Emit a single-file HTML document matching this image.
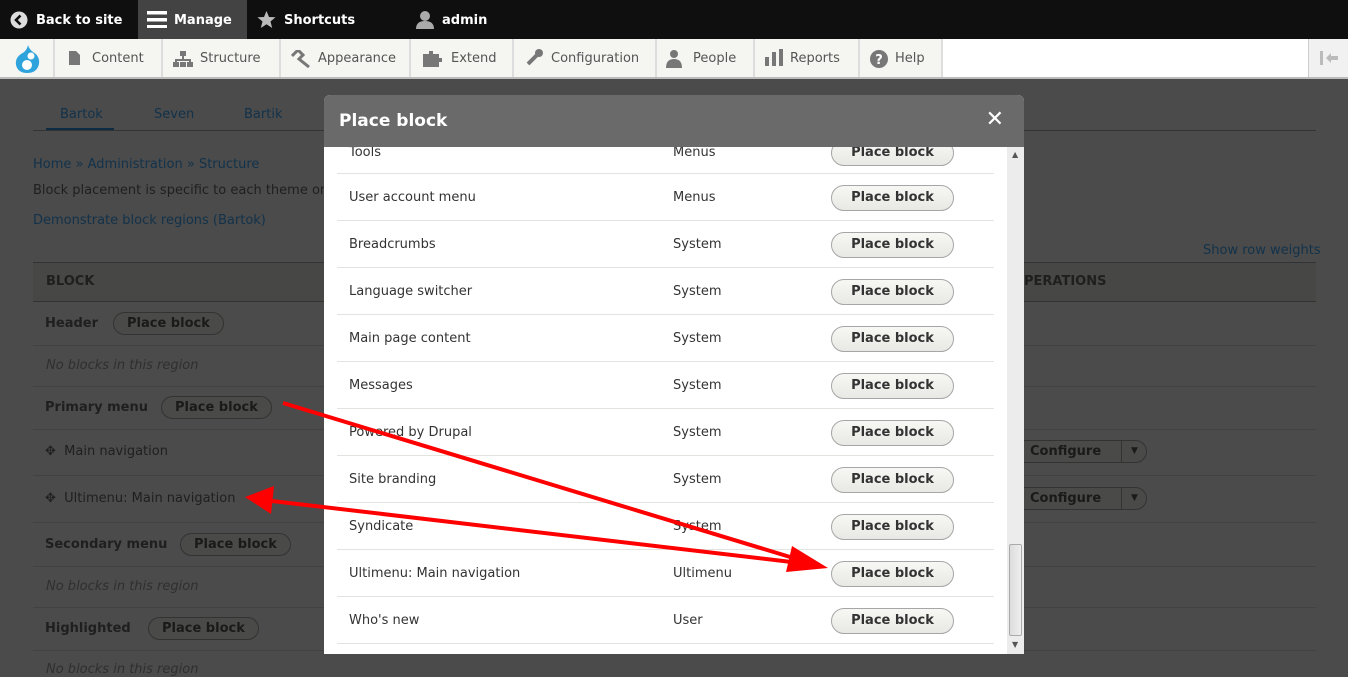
<!DOCTYPE html>
<html style="background:#4b4b4b"><head><style>
*{box-sizing:border-box;margin:0;padding:0}
body{width:1348px;height:669px;overflow:hidden;background:#4b4b4b;font-family:"DejaVu Sans","Liberation Sans",sans-serif;font-size:13px;position:relative}
.abs{position:absolute}
.top{left:0;top:0;width:1348px;height:39px;background:#0f0f0f;color:#fff;font-weight:bold;font-size:13px}
.top span{position:absolute;top:13px}
.bar{left:0;top:39px;width:1348px;height:40px;background:#fff;border-bottom:2px solid #bbb}
.bar .it{position:absolute;top:0;height:38px;background:#f5f5f2;border-right:2px solid #ddd;color:#555;font-size:13px;line-height:40px}
.dk{color:#1f1f1f}
.lk{color:#12324b}
.pb{position:absolute;border:1px solid #333;border-radius:12px;height:23px;font-weight:bold;color:#1a1a1a;font-size:13px;line-height:21px;padding:0 13px;background:#4a4a48}
.modal{left:324px;top:95px;width:700px;height:559px;background:#fff;border-radius:6px 6px 0 0;overflow:hidden}
.mh{position:absolute;left:0;top:0;width:700px;height:52px;background:#6a6a6a;color:#fff;font-weight:bold;font-size:17px;padding:16px 15px;z-index:5}
.row{position:absolute;left:13px;width:657px;height:47px;border-bottom:1px solid #e3e3e0;color:#333;font-size:13px}
.row .a{position:absolute;left:12px;top:16px}
.row .b{position:absolute;left:336px;top:16px}
.row .c{position:absolute;left:494px;top:11px;width:123px;height:26px;border:1px solid #a6a6a6;border-radius:13px;background:linear-gradient(#f7f7f4,#e8e8e4);text-align:center;line-height:24px;font-weight:bold;color:#333}
</style></head><body>
<div class="abs" style="left:0;top:0;width:1348px;height:669px;background:#4b4b4b"></div>
<div class="abs top">
<div class="abs" style="left:138px;top:0;width:109px;height:39px;background:#434343"></div>
<svg class="abs" style="left:10px;top:11px" width="18" height="18"><circle cx="9" cy="9" r="8.5" fill="#ddd"/><path d="M10.5 4.5 L6 9 L10.5 13.5" stroke="#0f0f0f" stroke-width="2.6" fill="none"/></svg>
<span style="left:36px">Back to site</span>
<svg class="abs" style="left:147px;top:11px" width="20" height="17"><rect y="0" width="20" height="3.5" fill="#fff"/><rect y="7" width="20" height="3.5" fill="#fff"/><rect y="14" width="20" height="3" fill="#fff"/></svg>
<span style="left:174px">Manage</span>
<svg class="abs" style="left:257px;top:10px" width="19" height="19"><path d="M9.5 1 L12 7 L18.5 7.3 L13.5 11.5 L15.2 18 L9.5 14.3 L3.8 18 L5.5 11.5 L0.5 7.3 L7 7Z" fill="#bbb"/></svg>
<span style="left:284px">Shortcuts</span>
<svg class="abs" style="left:415px;top:10px" width="20" height="19"><circle cx="10" cy="6" r="5" fill="#aaa"/><path d="M1 19 Q1 11 10 11 Q19 11 19 19Z" fill="#aaa"/></svg>
<span style="left:442px">admin</span>
</div>
<div class="abs bar">
<div class="it" style="left:0;width:55px"><svg style="position:absolute;left:11px;top:4px" width="32" height="32"><path d="M17 2 Q16 8 10 11 Q4 15 5 22 Q7 30 16 30 Q26 30 28 21 Q29 13 22 9 Q18 6 17 2Z" fill="#2ea3dc"/><circle cx="20" cy="13" r="3.5" fill="#fff"/><circle cx="16" cy="22" r="5" fill="#fff"/></svg></div>
<div class="it" style="left:55px;width:108px"><svg style="position:absolute;left:14px;top:12px" width="11" height="14"><path d="M0 0H7L11 4V14H0Z" fill="#777"/></svg><span style="position:absolute;left:37px">Content</span></div>
<div class="it" style="left:163px;width:118px"><svg style="position:absolute;left:10px;top:12px" width="20" height="16"><rect x="7" y="0" width="6" height="5" fill="#777"/><path d="M10 5V9M3 13V9H17V13" stroke="#777" stroke-width="2" fill="none"/><rect x="0" y="11" width="6" height="5" fill="#777"/><rect x="7" y="11" width="6" height="5" fill="#777"/><rect x="14" y="11" width="6" height="5" fill="#777"/></svg><span style="position:absolute;left:37px">Structure</span></div>
<div class="it" style="left:281px;width:130px"><svg style="position:absolute;left:10px;top:11px" width="20" height="18"><path d="M1 6 L7 0 L12 5 L8 9 L18 17" stroke="#777" stroke-width="3" fill="none"/></svg><span style="position:absolute;left:37px">Appearance</span></div>
<div class="it" style="left:411px;width:103px"><svg style="position:absolute;left:12px;top:11px" width="20" height="17"><path d="M0 4H6V1H10V4H16V8H19V12H16V17H0Z" fill="#777"/></svg><span style="position:absolute;left:40px">Extend</span></div>
<div class="it" style="left:514px;width:143px"><svg style="position:absolute;left:10px;top:10px" width="19" height="19"><path d="M17 2 L4 15" stroke="#777" stroke-width="4"/><circle cx="15" cy="4" r="4" fill="#777"/></svg><span style="position:absolute;left:37px">Configuration</span></div>
<div class="it" style="left:657px;width:98px"><svg style="position:absolute;left:9px;top:10px" width="20" height="19"><circle cx="8" cy="5" r="4" fill="#777"/><path d="M0 19Q0 10 8 10Q16 10 16 19Z" fill="#777"/></svg><span style="position:absolute;left:36px">People</span></div>
<div class="it" style="left:755px;width:105px"><svg style="position:absolute;left:10px;top:10px" width="18" height="17"><rect x="0" y="8" width="4" height="9" fill="#777"/><rect x="7" y="3" width="4" height="14" fill="#777"/><rect x="14" y="0" width="4" height="17" fill="#777"/></svg><span style="position:absolute;left:35px">Reports</span></div>
<div class="it" style="left:860px;width:83px"><svg style="position:absolute;left:10px;top:11px" width="18" height="18"><circle cx="9" cy="9" r="9" fill="#777"/><text x="9" y="14" font-size="13" font-weight="bold" fill="#fff" text-anchor="middle" font-family="DejaVu Sans">?</text></svg><span style="position:absolute;left:35px">Help</span></div>
<div class="abs" style="left:1308px;top:0;width:40px;height:38px;background:#f1f1f1;border-left:1px solid #ccc"><svg style="position:absolute;left:11px;top:12px" width="20" height="14"><rect x="0" y="0" width="3" height="14" fill="#bbb"/><path d="M6 7L11 2V5H18V9H11V12Z" fill="#bbb"/></svg></div>
</div>

<div class="abs lk" style="left:60px;top:107px">Bartok</div>
<div class="abs lk" style="left:154px;top:107px">Seven</div>
<div class="abs lk" style="left:244px;top:107px">Bartik</div>
<div class="abs" style="left:46px;top:128px;width:68px;height:2px;background:#0b2c44"></div>
<div class="abs" style="left:33px;top:130px;width:1283px;height:1px;background:#333"></div>
<div class="abs lk" style="left:33px;top:157px">Home » Administration » Structure</div>
<div class="abs dk" style="left:33px;top:183px">Block placement is specific to each theme on y</div>
<div class="abs lk" style="left:33px;top:213px">Demonstrate block regions (Bartok)</div>
<div class="abs lk" style="left:1203px;top:243px">Show row weights</div>
<div class="abs" style="left:33px;top:262px;width:1283px;height:40px;background:#474745;border-top:1px solid #333;border-bottom:1px solid #333"></div>
<div class="abs dk" style="left:46px;top:274px;font-weight:bold">BLOCK</div>
<div class="abs dk" style="left:1024px;top:274px;font-weight:bold">PERATIONS</div>
<div class="abs dk" style="left:45px;top:316px;font-weight:bold">Header</div><div class="pb" style="left:113px;top:312px">Place block</div>
<div class="abs" style="left:33px;top:345px;width:1283px;height:1px;background:#424242"></div>
<div class="abs" style="left:46px;top:358px;color:#2f2f2f;font-style:italic">No blocks in this region</div>
<div class="abs" style="left:33px;top:386px;width:1283px;height:1px;background:#424242"></div>
<div class="abs dk" style="left:45px;top:400px;font-weight:bold">Primary menu</div><div class="pb" style="left:161px;top:396px">Place block</div>
<div class="abs" style="left:33px;top:429px;width:1283px;height:1px;background:#424242"></div>
<div class="abs dk" style="left:45px;top:444px">✥&nbsp;&nbsp;Main navigation</div>
<div class="abs" style="left:33px;top:475px;width:1283px;height:1px;background:#424242"></div>
<div class="abs dk" style="left:45px;top:491px">✥&nbsp;&nbsp;Ultimenu: Main navigation</div>
<div class="abs" style="left:33px;top:522px;width:1283px;height:1px;background:#424242"></div>
<div class="pb" style="left:1000px;top:440px;width:147px;padding-left:29px">Configure<span style="position:absolute;left:120px;top:0;height:21px;border-left:1px solid #333;width:26px;text-align:center;font-size:9px">▼</span></div>
<div class="pb" style="left:1000px;top:487px;width:147px;padding-left:29px">Configure<span style="position:absolute;left:120px;top:0;height:21px;border-left:1px solid #333;width:26px;text-align:center;font-size:9px">▼</span></div>
<div class="abs dk" style="left:45px;top:537px;font-weight:bold">Secondary menu</div><div class="pb" style="left:180px;top:533px">Place block</div>
<div class="abs" style="left:33px;top:566px;width:1283px;height:1px;background:#424242"></div>
<div class="abs" style="left:46px;top:579px;color:#2f2f2f;font-style:italic">No blocks in this region</div>
<div class="abs" style="left:33px;top:607px;width:1283px;height:1px;background:#424242"></div>
<div class="abs dk" style="left:45px;top:621px;font-weight:bold">Highlighted</div><div class="pb" style="left:148px;top:617px">Place block</div>
<div class="abs" style="left:33px;top:650px;width:1283px;height:1px;background:#424242"></div>
<div class="abs" style="left:46px;top:662px;color:#2f2f2f;font-style:italic">No blocks in this region</div>

<div class="abs modal">
<div class="mh">Place block<span style="position:absolute;right:20px;top:12px;font-size:22px">✕</span></div>
<div class="row" style="top:32px"><span class="a" style="top:18px">Tools</span><span class="b" style="top:18px">Menus</span><span class="c" style="top:13px">Place block</span></div>
<div class="row" style="top:79px"><span class="a">User account menu</span><span class="b">Menus</span><span class="c">Place block</span></div>
<div class="row" style="top:126px"><span class="a">Breadcrumbs</span><span class="b">System</span><span class="c">Place block</span></div>
<div class="row" style="top:173px"><span class="a">Language switcher</span><span class="b">System</span><span class="c">Place block</span></div>
<div class="row" style="top:220px"><span class="a">Main page content</span><span class="b">System</span><span class="c">Place block</span></div>
<div class="row" style="top:267px"><span class="a">Messages</span><span class="b">System</span><span class="c">Place block</span></div>
<div class="row" style="top:314px"><span class="a">Powered by Drupal</span><span class="b">System</span><span class="c">Place block</span></div>
<div class="row" style="top:361px"><span class="a">Site branding</span><span class="b">System</span><span class="c">Place block</span></div>
<div class="row" style="top:408px"><span class="a">Syndicate</span><span class="b">System</span><span class="c">Place block</span></div>
<div class="row" style="top:455px"><span class="a">Ultimenu: Main navigation</span><span class="b">Ultimenu</span><span class="c">Place block</span></div>
<div class="row" style="top:502px"><span class="a">Who's new</span><span class="b">User</span><span class="c">Place block</span></div>
<div class="abs" style="left:683px;top:52px;width:17px;height:507px;background:#ececec"></div>
<div class="abs" style="left:685px;top:449px;width:13px;height:92px;background:linear-gradient(90deg,#ddd,#eee);border:1px solid #aaa;border-radius:2px"></div>
<div class="abs" style="left:688px;top:55px;font-size:8px;color:#555">▲</div>
<div class="abs" style="left:688px;top:545px;font-size:8px;color:#555">▼</div>
</div>

<svg class="abs" style="left:0;top:0" width="1348" height="669">
<line x1="283" y1="403" x2="800" y2="560" stroke="#f00" stroke-width="4"/>
<polygon points="828,568 792,546 786,572" fill="#f00"/>
<line x1="272" y1="501" x2="800" y2="563" stroke="#f00" stroke-width="4"/>
<polygon points="245,497 274,486 271,514" fill="#f00"/>
</svg>
</body></html>
